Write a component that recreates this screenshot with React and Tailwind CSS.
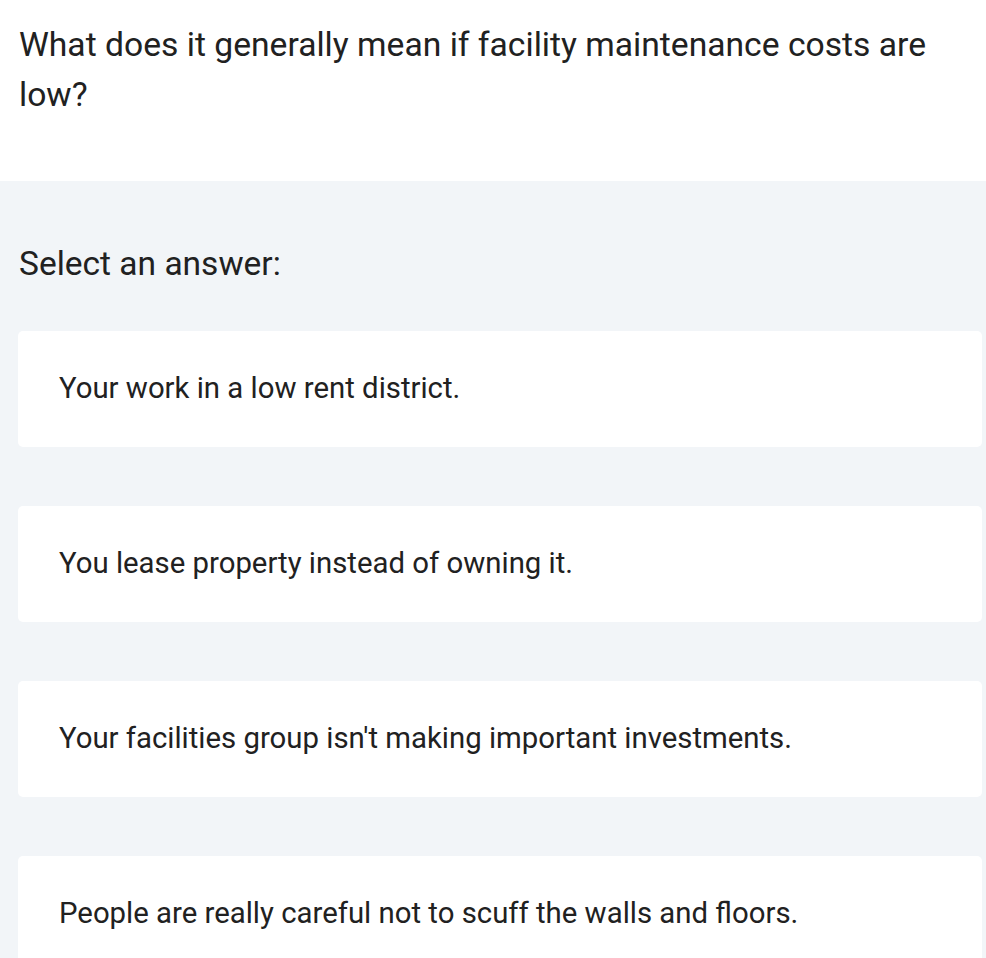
import React from 'react';

const answers = [
    "Your work in a low rent district.",
    "You lease property instead of owning it.",
    "Your facilities group isn't making important investments.",
    "People are really careful not to scuff the walls and floors.",
];

export default function App() {
    return (
        <div className="min-h-screen bg-white text-[#212121]" style={{ fontFamily: 'Roboto, "Liberation Sans", sans-serif' }}>
            {/* Question */}
            <div className="pl-[19px] pr-[40px] pt-[20px] pb-[61px]">
                <h1 className="text-[33.65px] leading-[50px] font-normal">
                    What does it generally mean if facility maintenance costs are low?
                </h1>
            </div>

            {/* Answers */}
            <div className="bg-[#f2f5f8] min-h-[777px] pt-[63px] pl-[18px] pr-[4px] pb-10">
                <p className="pl-px text-[33.5px] leading-[40px]">Select an answer:</p>
                <div className="mt-[47px] flex flex-col gap-[59px]">
                    {answers.map((a) => (
                        <button
                            key={a}
                            className="h-[116px] w-full rounded-[5px] bg-white pl-[41px] pr-6 pb-[3px] text-left text-[29.35px] leading-[36px]"
                        >
                            {a}
                        </button>
                    ))}
                </div>
            </div>
        </div>
    );
}
